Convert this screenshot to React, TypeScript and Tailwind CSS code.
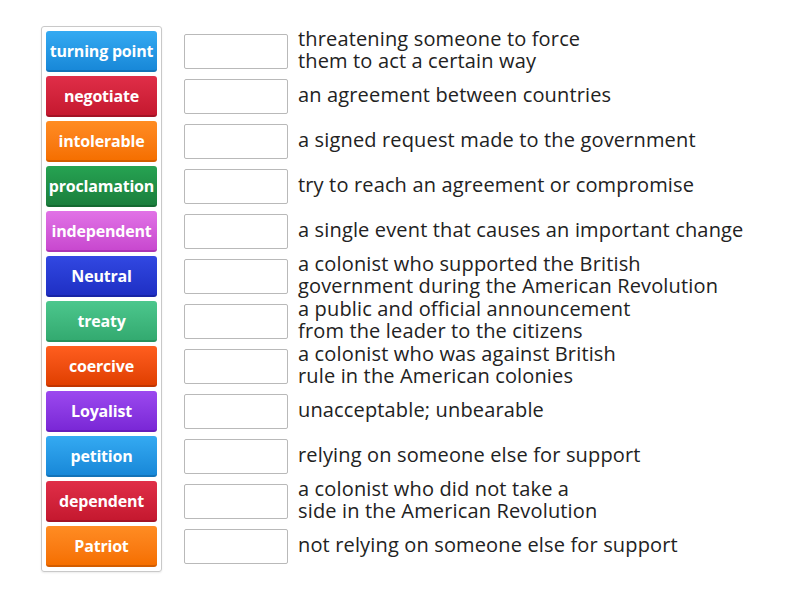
import React from 'react';

type Tile = { label: string; cls: string };

const tiles: Tile[] = [
  { label: 'turning point', cls: 'from-[#34aaf2] to-[#1888d8] border-[#1373b8]' },
  { label: 'negotiate', cls: 'from-[#e02e48] to-[#c5182f] border-[#a31225]' },
  { label: 'intolerable', cls: 'from-[#ff8c22] to-[#f56f00] border-[#d35d00]' },
  { label: 'proclamation', cls: 'from-[#26a352] to-[#1b7f3d] border-[#146a31]' },
  { label: 'independent', cls: 'from-[#e172e6] to-[#c848cf] border-[#ac35b3]' },
  { label: 'Neutral', cls: 'from-[#3248e2] to-[#1f2fc4] border-[#1824a6]' },
  { label: 'treaty', cls: 'from-[#4cc78d] to-[#33aa70] border-[#27915d]' },
  { label: 'coercive', cls: 'from-[#ff5e1e] to-[#e03f00] border-[#c03500]' },
  { label: 'Loyalist', cls: 'from-[#9c48ef] to-[#7a27d6] border-[#661cba]' },
  { label: 'petition', cls: 'from-[#34aaf2] to-[#1888d8] border-[#1373b8]' },
  { label: 'dependent', cls: 'from-[#e02e48] to-[#c5182f] border-[#a31225]' },
  { label: 'Patriot', cls: 'from-[#ff8c22] to-[#f56f00] border-[#d35d00]' },
];

const definitions: string[][] = [
  ['threatening someone to force', 'them to act a certain way'],
  ['an agreement between countries'],
  ['a signed request made to the government'],
  ['try to reach an agreement or compromise'],
  ['a single event that causes an important change'],
  ['a colonist who supported the British', 'government during the American Revolution'],
  ['a public and official announcement', 'from the leader to the citizens'],
  ['a colonist who was against British', 'rule in the American colonies'],
  ['unacceptable; unbearable'],
  ['relying on someone else for support'],
  ['a colonist who did not take a', 'side in the American Revolution'],
  ['not relying on someone else for support'],
];

export default function App() {
  return (
    <div className="w-[800px] h-[600px] bg-white font-['Open_Sans',sans-serif] flex items-start pt-[26px] pl-[41px]">
      <div className="w-[121px] border border-[#c9c9c9] rounded-[3px] p-[4px] flex flex-col gap-[4px] shadow-[0_1px_2px_rgba(0,0,0,0.08)]">
        {tiles.map((t) => (
          <div
            key={t.label}
            className={`h-[41px] rounded-[3px] bg-gradient-to-b border-b-2 flex items-center justify-center text-white font-bold text-[16px] tracking-[-0.2px] whitespace-nowrap ${t.cls}`}
          >
            {t.label}
          </div>
        ))}
      </div>

      <div className="flex flex-col pt-[3px] ml-[22px]">
        {definitions.map((lines, i) => (
          <div key={i} className="h-[45px] flex items-center">
            <div className="w-[104px] h-[35px] border border-[#b9b9b9] rounded-[2px] bg-white shrink-0" />
            <div className="ml-[10px] text-[20px] leading-[22px] tracking-[0.15px] text-[#222] -mt-[3px] whitespace-nowrap">
              {lines.map((l) => (
                <div key={l}>{l}</div>
              ))}
            </div>
          </div>
        ))}
      </div>
    </div>
  );
}
